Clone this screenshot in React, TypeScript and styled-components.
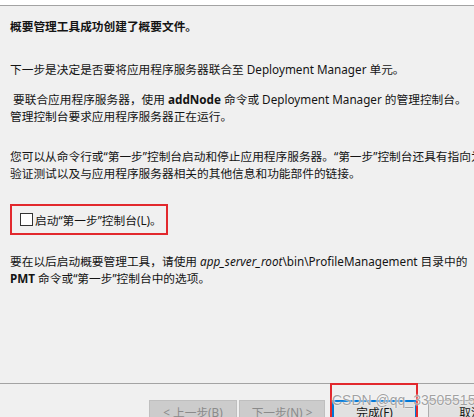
import React from "react";
import styled, { createGlobalStyle } from "styled-components";

const Global = createGlobalStyle`
  html, body { margin: 0; padding: 0; background: #f0f0f0; overflow: hidden; }
  #root { width: 474px; height: 417px; }
`;

const Dialog = styled.div`
  position: relative;
  width: 474px;
  height: 417px;
  display: flex;
  flex-direction: column;
  overflow: hidden;
  background: #f0f0f0;
  font-family: "Noto Sans", "Noto Sans CJK SC", sans-serif;
  font-size: 11.7px;
  color: #141414;
`;

const TopStrip = styled.div`
  height: 5px;
  flex-shrink: 0;
  background: #ffffff;
  border-bottom: 1px solid #a3a3a3;
`;

const Body = styled.div`
  flex: 1;
  padding: 12px 0 0 10px;
  overflow: hidden;
`;

const Title = styled.div`
  font-weight: 700;
  line-height: 17px;
  white-space: nowrap;
`;

const Para = styled.div<{ $gap: number }>`
  margin-top: ${(p) => p.$gap}px;
  line-height: 17px;
  white-space: nowrap;
`;

const Line = styled.div`
  white-space: nowrap;
`;

const Strong = styled.b`
  font-weight: 700;
`;

const Em = styled.i`
  font-style: italic;
`;

const CheckRow = styled.label<{ $gap: number }>`
  margin-top: ${(p) => p.$gap}px;
  box-sizing: border-box;
  display: inline-flex;
  align-items: center;
  gap: 2px;
  height: 31px;
  padding: 0 4px 0 8px;
  border: 2px solid #e2282d;
  white-space: nowrap;
`;

const CheckBox = styled.span`
  box-sizing: border-box;
  width: 13px;
  height: 13px;
  border: 1px solid #333333;
  background: #ffffff;
  flex-shrink: 0;
`;

const Footer = styled.div`
  height: 34px;
  flex-shrink: 0;
  box-sizing: border-box;
  border-top: 1px solid #a3a3a3;
  padding: 16px 0 0 149px;
  display: flex;
  align-items: flex-start;
  white-space: nowrap;
`;

const Button = styled.div<{ $w: number; $ml?: number; $kind: "disabled" | "default" | "normal" }>`
  position: relative;
  box-sizing: border-box;
  flex-shrink: 0;
  width: ${(p) => p.$w}px;
  height: 23px;
  margin-left: ${(p) => p.$ml ?? 0}px;
  display: flex;
  align-items: center;
  justify-content: center;
  font-size: 11.7px;
  background: ${(p) => (p.$kind === "disabled" ? "#cccccc" : "#e1e1e1")};
  border: ${(p) =>
    p.$kind === "disabled"
      ? "1px solid #bfbfbf"
      : p.$kind === "default"
      ? "2px solid #0078d7"
      : "1px solid #adadad"};
  color: ${(p) => (p.$kind === "disabled" ? "#8a8a8a" : "#141414")};
`;

const Highlight = styled.span`
  position: absolute;
  left: -4px;
  right: -3px;
  top: -19px;
  bottom: -12px;
  border: 2px solid #e2282d;
  pointer-events: none;
`;

const Watermark = styled.div`
  position: absolute;
  left: 332px;
  top: 392px;
  font-family: "Liberation Sans", Arial, sans-serif;
  font-size: 14px;
  color: rgba(130, 130, 130, 0.75);
  text-shadow: 0 0 1px #ffffff, 0 0 2px #ffffff;
  white-space: nowrap;
  pointer-events: none;
`;

export default function App() {
  return (
    <>
      <Global />
      <Dialog>
        <TopStrip />
        <Body>
          <Title>概要管理工具成功创建了概要文件。</Title>
          <Para $gap={26}>下一步是决定是否要将应用程序服务器联合至 Deployment Manager 单元。</Para>
          <Para $gap={13}>
            <Line>
              &nbsp;要联合应用程序服务器，使用 <Strong>addNode</Strong> 命令或 Deployment Manager 的管理控制台。
            </Line>
            <Line>管理控制台要求应用程序服务器正在运行。</Line>
          </Para>
          <Para $gap={23}>
            <Line>
              您可以从命令行或“第一步”控制台启动和停止应用程序服务器。“第一步”控制台还具有指向为
            </Line>
            <Line>验证测试以及与应用程序服务器相关的其他信息和功能部件的链接。</Line>
          </Para>
          <CheckRow $gap={22}>
            <CheckBox />
            启动“第一步”控制台(L)。
          </CheckRow>
          <Para $gap={18}>
            <Line>
              要在以后启动概要管理工具，请使用 <Em>app_server_root</Em>\bin\ProfileManagement 目录中的
            </Line>
            <Line>
              <Strong>PMT</Strong> 命令或“第一步”控制台中的选项。
            </Line>
          </Para>
        </Body>
        <Footer>
          <Button $w={88} $kind="disabled">&lt; 上一步(B)</Button>
          <Button $w={86} $ml={2} $kind="disabled">下一步(N) &gt;</Button>
          <Button $w={85} $ml={7} $kind="default">
            完成(F)
            <Highlight />
          </Button>
          <Button $w={86} $ml={11} $kind="normal">取消</Button>
        </Footer>
        <Watermark>CSDN @qq_33505515</Watermark>
      </Dialog>
    </>
  );
}
